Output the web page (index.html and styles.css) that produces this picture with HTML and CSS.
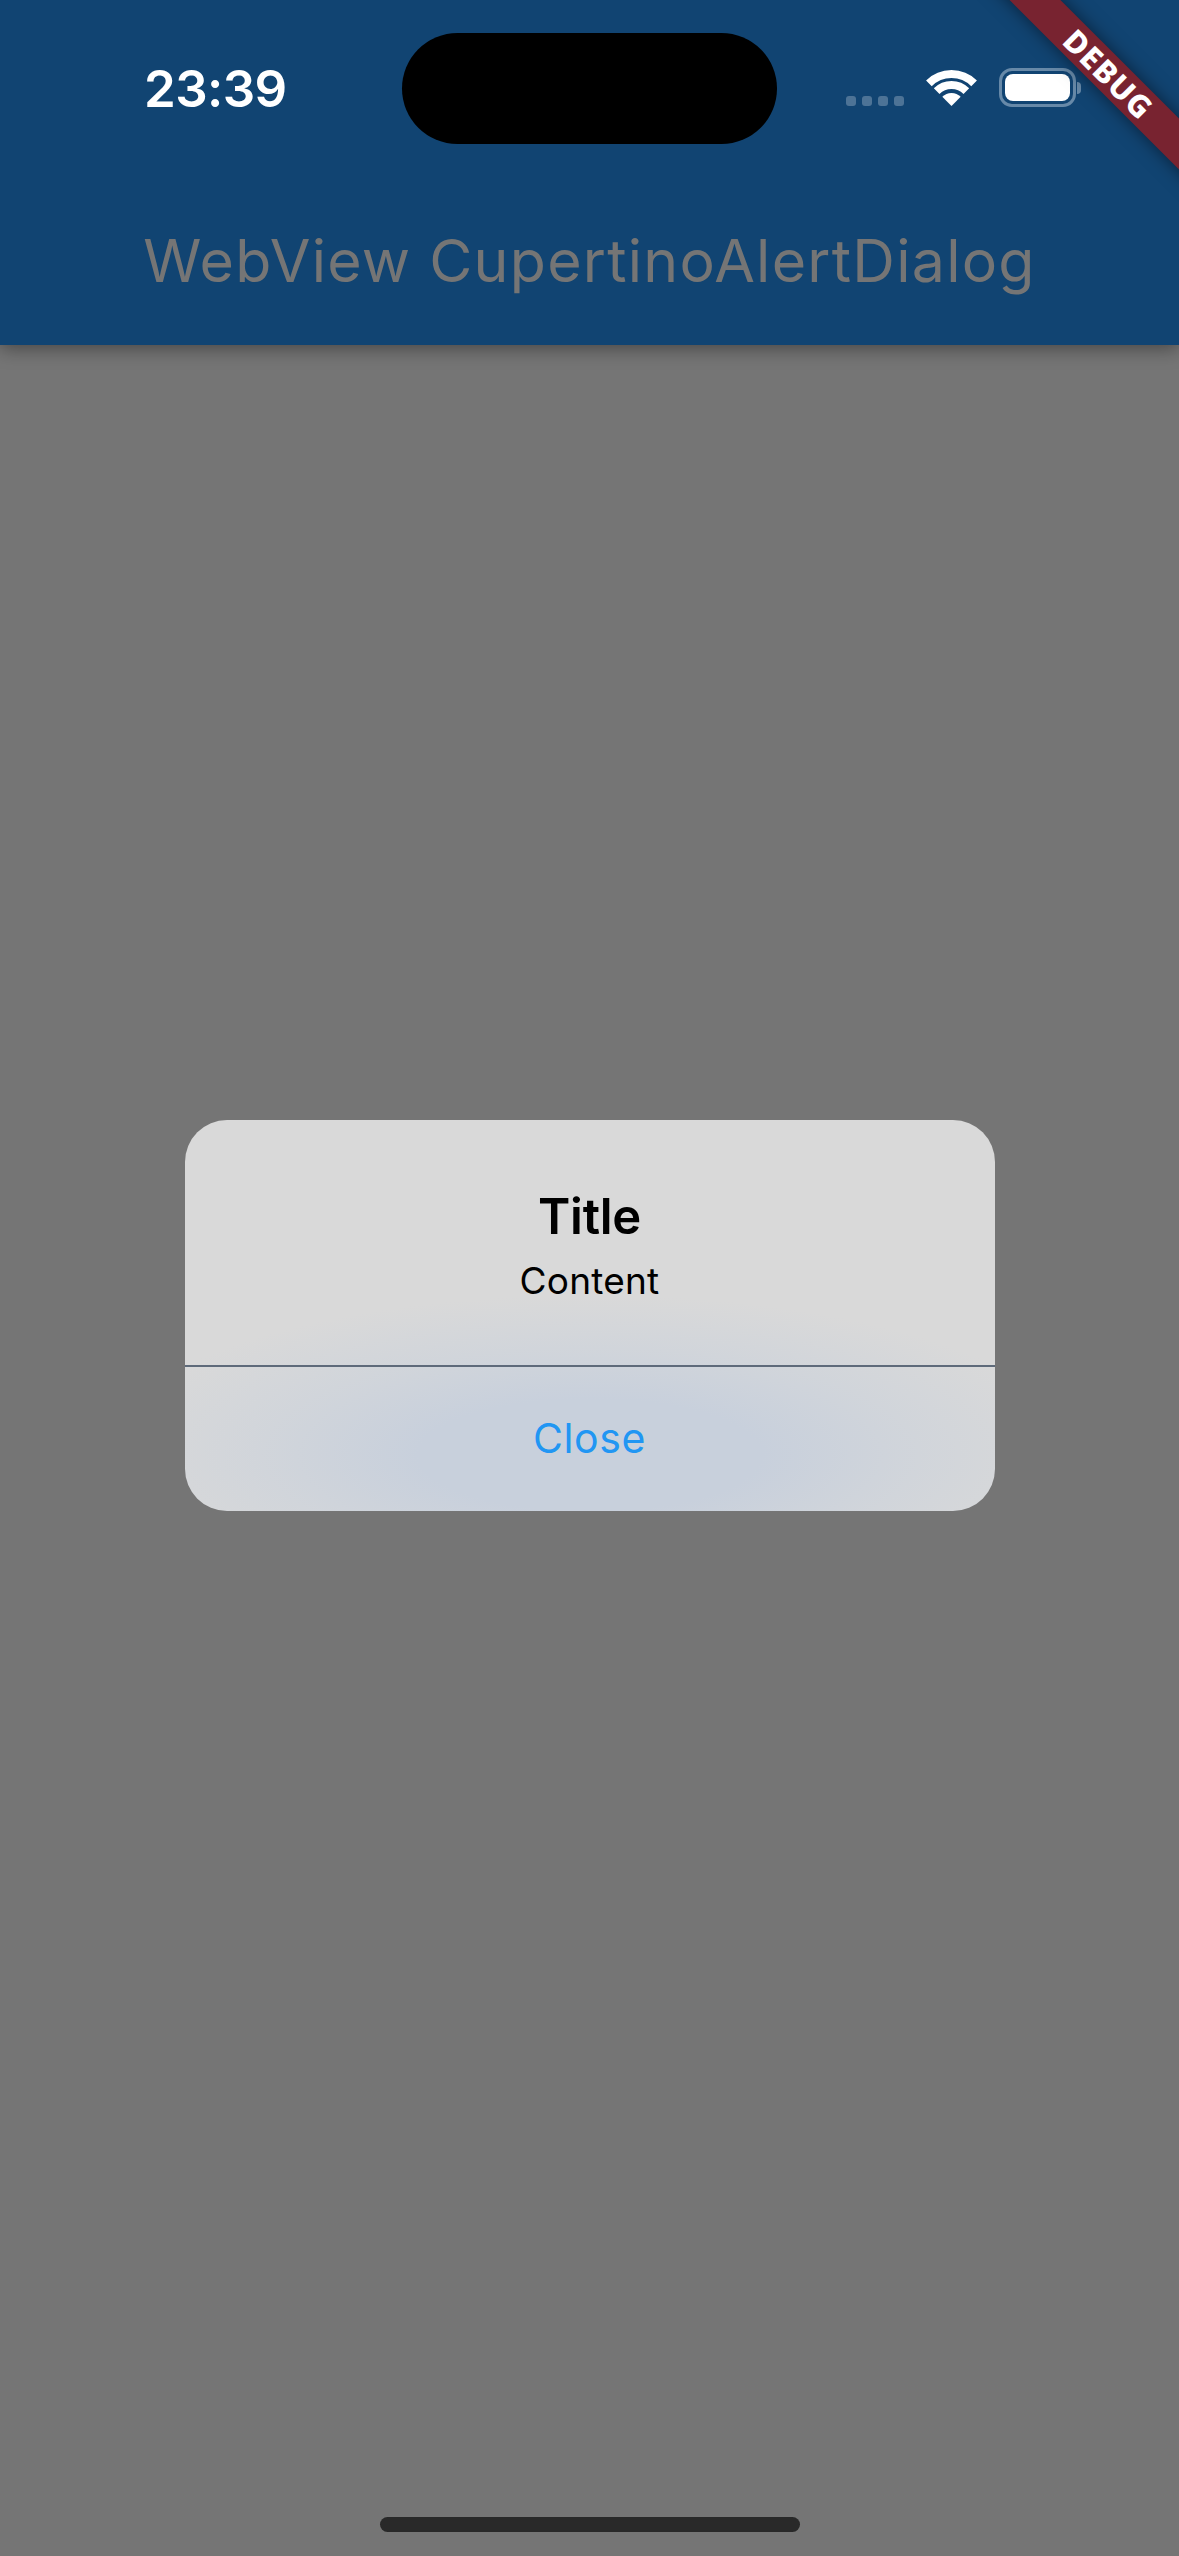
FILE: index.html
```html
<!DOCTYPE html>
<html lang="en">
<head>
<meta charset="utf-8">
<title>WebView CupertinoAlertDialog</title>
<link rel="stylesheet" href="styles.css">
</head>
<body>
<div class="screen">
  <header class="appbar">
    <div class="status">
      <div class="status-left"><span class="time">23:39</span></div>
      <div class="island"></div>
      <div class="status-right">
        <div class="dots"><i></i><i></i><i></i><i></i></div>
        <svg class="wifi" viewBox="0 0 51 37" width="51" height="37" aria-hidden="true">
          <path d="M2.9 14.4A32 32 0 0 1 48.1 14.4" fill="none" stroke="#fff" stroke-width="8"/>
          <path d="M10.65 22.15A21 21 0 0 1 40.35 22.15" fill="none" stroke="#fff" stroke-width="8"/>
          <path d="M25.5 37L16.3 27.8A13 13 0 0 1 34.7 27.8Z" fill="#fff"/>
        </svg>
        <div class="battery"><div class="battery-fill"></div></div>
        <div class="battery-nub"></div>
      </div>
    </div>
    <h1 class="title">WebView CupertinoAlertDialog</h1>
  </header>
  <main class="body">
    <section class="dialog">
      <div class="dialog-text">
        <h2 class="dialog-title">Title</h2>
        <p class="dialog-content">Content</p>
      </div>
      <div class="dialog-action">Close</div>
    </section>
    <div class="home"></div>
  </main>
  <div class="banner">DEBUG</div>
</div>
</body>
</html>
```
FILE: styles.css
```css
* { box-sizing: border-box; }
html, body { margin: 0; padding: 0; }
body { width: 1179px; height: 2556px; overflow: hidden; background: #757575; }
.screen {
  position: relative;
  width: 1179px;
  height: 2556px;
  overflow: hidden;
  display: flex;
  flex-direction: column;
  background: #757575;
  font-family: Inter, "Liberation Sans", sans-serif;
}
.appbar {
  height: 345px;
  flex: none;
  background: #114472;
  box-shadow: 0 3px 18px rgba(0, 0, 0, 0.42);
  display: flex;
  flex-direction: column;
  position: relative;
}
.status { display: flex; height: 144px; padding-top: 33px; }
.status-left { width: 402px; padding-left: 144px; padding-top: 26px; }
.time {
  display: block;
  font-family: Inter, sans-serif;
  font-size: 51px;
  line-height: 60px;
  font-weight: 600;
  letter-spacing: -0.6px;
  color: #fff;
}
.island { width: 375px; height: 111px; border-radius: 56px; background: #000; }
.status-right {
  margin-top: 35px;
  margin-left: 69px;
  height: 39px;
  display: flex;
  align-items: center;
}
.dots { display: flex; gap: 6px; align-self: flex-end; margin-bottom: 1px; }
.dots i { display: block; width: 10px; height: 10px; border-radius: 3px; background: #4d7396; }
.wifi { margin-left: 22px; }
.battery {
  margin-left: 22px;
  width: 77px;
  height: 39px;
  border: 3px solid #6789a8;
  border-radius: 13px;
  padding: 3px;
}
.battery-fill { width: 100%; height: 100%; background: #fff; border-radius: 8px; }
.battery-nub { margin-left: 1px; width: 4px; height: 12px; border-radius: 0 6px 6px 0; background: #6789a8; }
.title {
  margin: 0;
  padding-top: 82px;
  text-align: center;
  font-family: Inter, sans-serif;
  font-size: 59px;
  line-height: 70px;
  font-weight: 400;
  letter-spacing: 1.27px;
  color: #757575;
}
.body {
  flex: 1;
  display: flex;
  flex-direction: column;
  align-items: center;
  padding-top: 775px;
  padding-bottom: 24px;
}
.dialog {
  width: 810px;
  height: 391px;
  border-radius: 42px;
  overflow: hidden;
  background:
    radial-gradient(ellipse 490px 160px at 50% 335px, rgba(200, 208, 220, 1) 35%, rgba(207, 212, 219, 0.85) 65%, rgba(217, 217, 217, 0) 100%),
    #d9d9d9;
  display: flex;
  flex-direction: column;
}
.dialog-text {
  height: 247px;
  flex: none;
  border-bottom: 2px solid #5e6a7a;
  text-align: center;
  padding-top: 69px;
}
.dialog-title {
  margin: 0;
  font-size: 49px;
  line-height: 56px;
  font-weight: 600;
  letter-spacing: -0.3px;
  color: #000;
}
.dialog-content {
  margin: 13px 0 0;
  font-size: 37px;
  line-height: 46px;
  font-weight: 400;
  letter-spacing: 0.2px;
  color: #000;
}
.dialog-action {
  flex: 1;
  display: flex;
  align-items: center;
  justify-content: center;
  padding-bottom: 2px;
  font-size: 41px;
  font-weight: 400;
  letter-spacing: 0.6px;
  color: #2196f3;
}
.home {
  margin-top: auto;
  width: 420px;
  height: 15px;
  border-radius: 8px;
  background: #292929;
}
.banner {
  position: absolute;
  left: 907px;
  top: 54px;
  width: 400px;
  height: 36px;
  transform: rotate(45deg);
  background: #782330;
  box-shadow: 0 0 18px rgba(0, 0, 0, 0.5);
  color: #fff;
  font-family: "Noto Sans", sans-serif;
  font-weight: 800;
  font-size: 31px;
  line-height: 36px;
  letter-spacing: 1px;
  padding-left: 5px;
  text-align: center;
}
```
